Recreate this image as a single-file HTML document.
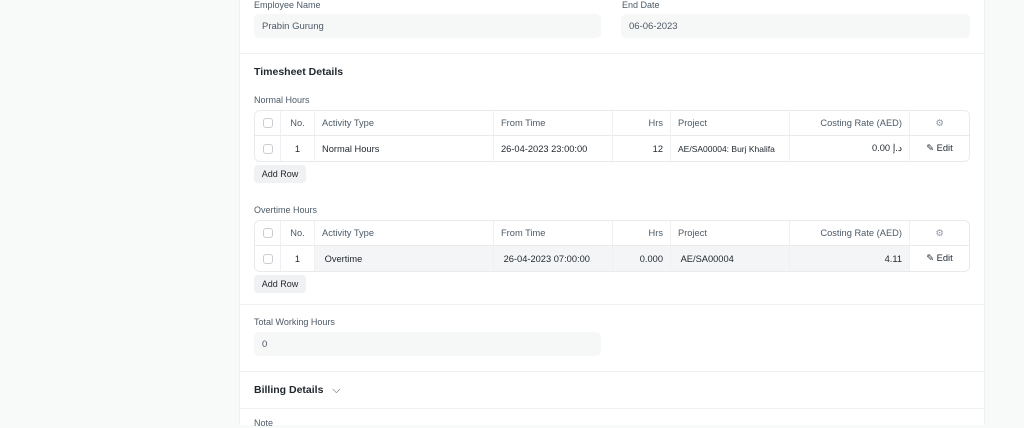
<!DOCTYPE html>
<html><head><style>
*{box-sizing:border-box;margin:0;padding:0}
body{width:1024px;height:425px;overflow:hidden;background:#f8f9f9;font-family:"Liberation Sans",sans-serif;color:#1f272e;position:relative}
.card{position:absolute;left:239px;top:0;width:746px;height:425px;background:#fff;border-left:1px solid #eef0f1;border-right:1px solid #eef0f1}
.a{position:absolute}
.lbl{font-size:9px;color:#4c5a67}
.inp{position:absolute;background:#f6f7f7;border-radius:5px;font-size:9.5px;color:#4c5a67;padding-left:8px;display:flex;align-items:center}
.sep{position:absolute;left:240px;width:744px;height:1px;background:#eef0f1}
.h{font-size:10.5px;font-weight:bold;color:#1f272e}
table{position:absolute;left:254px;width:716px;border-collapse:separate;border-spacing:0;border:1px solid #e8eaec;border-radius:6px;font-size:9.3px;color:#4c5a67;table-layout:fixed}
td{height:25px;border-right:1px solid #eef0f1;padding:0 7px;white-space:nowrap;overflow:hidden}
tr:first-child td{border-bottom:1px solid #e8eaec}
td:last-child{border-right:none}
.r{text-align:right}.c{text-align:center}
.cb{display:inline-block;width:10px;height:10px;border:1px solid #c8ced3;border-radius:3px;vertical-align:middle}
.d td{color:#1f272e}
.g td.x{background:#f4f5f6}
.btn{position:absolute;left:254px;width:52px;height:18px;background:#f0f1f2;border-radius:4px;font-size:9px;color:#1f272e;text-align:center;line-height:18px}
</style></head><body>
<div class="card"></div>
<div class="a lbl" style="left:254px;top:0px">Employee Name</div>
<div class="a lbl" style="left:622px;top:0px">End Date</div>
<div class="inp" style="left:254px;top:14px;width:347px;height:24px">Prabin Gurung</div>
<div class="inp" style="left:621px;top:14px;width:349px;height:24px">06-06-2023</div>
<div class="sep" style="top:53px"></div>
<div class="a h" style="left:254px;top:66px">Timesheet Details</div>
<div class="a lbl" style="left:254px;top:95px">Normal Hours</div>
<table style="top:110px">
<colgroup><col style="width:26px"><col style="width:34px"><col style="width:179px"><col style="width:119px"><col style="width:58px"><col style="width:119px"><col style="width:120px"><col style="width:59px"></colgroup>
<tr><td class="c"><span class="cb"></span></td><td class="c">No.</td><td>Activity Type</td><td>From Time</td><td class="r">Hrs</td><td>Project</td><td class="r">Costing Rate (AED)</td><td class="c" style="color:#8d99a6">⚙</td></tr>
<tr class="d"><td class="c"><span class="cb"></span></td><td class="c">1</td><td>Normal Hours</td><td>26-04-2023 23:00:00</td><td class="r">12</td><td style="font-size:8.5px">AE/SA00004: Burj Khalifa</td><td class="r">0.00 د.إ</td><td class="c">✎ Edit</td></tr>
</table>
<div class="btn" style="top:165px">Add Row</div>
<div class="a lbl" style="left:254px;top:205px">Overtime Hours</div>
<table style="top:220px">
<colgroup><col style="width:26px"><col style="width:34px"><col style="width:179px"><col style="width:119px"><col style="width:58px"><col style="width:119px"><col style="width:120px"><col style="width:59px"></colgroup>
<tr><td class="c"><span class="cb"></span></td><td class="c">No.</td><td>Activity Type</td><td>From Time</td><td class="r">Hrs</td><td>Project</td><td class="r">Costing Rate (AED)</td><td class="c" style="color:#8d99a6">⚙</td></tr>
<tr class="d g"><td class="c"><span class="cb"></span></td><td class="c">1</td><td class="x">&nbsp;Overtime</td><td class="x">&nbsp;26-04-2023 07:00:00</td><td class="x r">0.000</td><td class="x">&nbsp;AE/SA00004</td><td class="x r">4.11</td><td class="c">✎ Edit</td></tr>
</table>
<div class="btn" style="top:275px">Add Row</div>
<div class="sep" style="top:304px"></div>
<div class="a lbl" style="left:254px;top:317px">Total Working Hours</div>
<div class="inp" style="left:254px;top:332px;width:347px;height:24px">0</div>
<div class="sep" style="top:371px"></div>
<div class="a h" style="left:254px;top:384px">Billing Details <span style="font-weight:normal;color:#4c5a67;margin-left:6px">⌵</span></div>
<div class="sep" style="top:408px"></div>
<div class="a lbl" style="left:254px;top:418px">Note</div>
</body></html>
